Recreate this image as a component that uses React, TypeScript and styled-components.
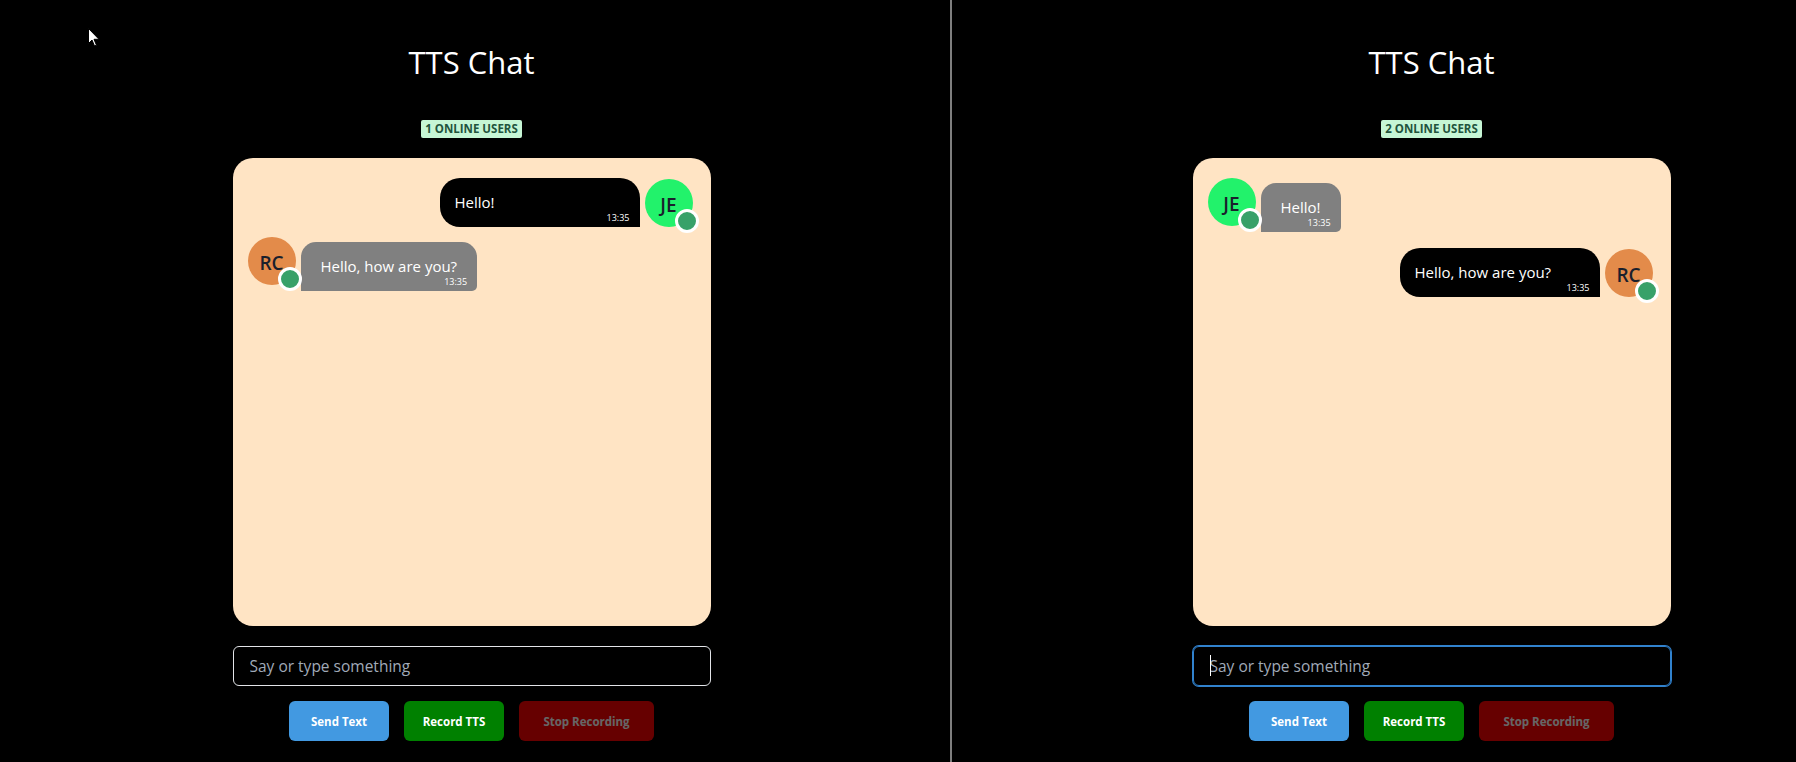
import styled, { createGlobalStyle } from "styled-components"
import React from "react"

const GlobalStyle = createGlobalStyle`
  html, body {
    margin: 0;
    padding: 0;
    background: #000;
  }
  body {
    font-family: "Open Sans", "Noto Sans", sans-serif;
    overflow: hidden;
  }
`

const Screen = styled.div`
  position: relative;
  display: flex;
  width: 1796px;
  height: 762px;
  overflow: hidden;
  background: #000;
`

const Pane = styled.div<{ $width: number; $padRight?: number }>`
  flex: none;
  box-sizing: border-box;
  width: ${(p) => p.$width}px;
  padding-right: ${(p) => p.$padRight || 0}px;
  display: flex;
  flex-direction: column;
  align-items: center;
`

const Divider = styled.div`
  flex: none;
  width: 2px;
  background: #7f7f7f;
`

const Title = styled.h1`
  margin: 43px 0 0;
  font-size: 31px;
  font-weight: 400;
  line-height: 38px;
  color: #fff;
`

const Badge = styled.span`
  margin-top: 39px;
  padding: 0 4px;
  border-radius: 2px;
  background: #c6f6d5;
  color: #22543d;
  font-size: 11.5px;
  font-weight: 700;
  line-height: 18px;
  text-transform: uppercase;
`

const ChatBox = styled.div`
  margin-top: 20px;
  box-sizing: border-box;
  width: 478px;
  height: 468px;
  padding: 20px 18px 0 15px;
  border-radius: 20px;
  background: #ffe4c4;
  display: flex;
  flex-direction: column;
`

const MessageRow = styled.div<{ $own?: boolean }>`
  display: flex;
  justify-content: ${(p) => (p.$own ? "flex-end" : "flex-start")};
  align-items: flex-start;
  gap: 5px;
  margin-bottom: 10px;
`

const Avatar = styled.div<{ $color: string; $own?: boolean }>`
  position: relative;
  flex: none;
  width: 48px;
  height: 48px;
  margin-top: ${(p) => (p.$own ? 1 : 0)}px;
  border-radius: 50%;
  background: ${(p) => p.$color};
  color: #1a202c;
  display: flex;
  align-items: center;
  justify-content: center;
  font-size: 19px;
  font-weight: 600;
  padding-top: 3px;
  box-sizing: border-box;
`

const OnlineDot = styled.span`
  position: absolute;
  right: 0;
  bottom: 0;
  transform: translate(25%, 25%);
  box-sizing: border-box;
  width: 24px;
  height: 24px;
  border: 3.5px solid #fff;
  border-radius: 50%;
  background: #38a169;
`

const Bubble = styled.div<{ $own?: boolean }>`
  box-sizing: border-box;
  width: ${(p) => (p.$own ? "200px" : "auto")};
  height: 49px;
  margin: ${(p) => (p.$own ? "0" : "5px 0 6px")};
  padding: 12px 10px 4px ${(p) => (p.$own ? 15 : 20)}px;
  border-radius: ${(p) => (p.$own ? "20px 20px 0 20px" : "15px 15px 5px 0")};
  background: ${(p) => (p.$own ? "#000" : "#808080")};
  color: #fff;
`

const BubbleText = styled.div`
  padding-right: 10px;
  font-size: 15px;
  line-height: 24px;
  white-space: nowrap;
`

const Time = styled.div`
  margin-top: -2px;
  font-size: 9px;
  line-height: 11px;
  text-align: right;
`

const InputWrap = styled.div`
  position: relative;
  margin-top: 20px;
  width: 478px;
`

const TextInput = styled.input<{ $focused?: boolean }>`
  box-sizing: border-box;
  width: 100%;
  height: 40px;
  padding: 0 16px;
  border: 1px solid ${(p) => (p.$focused ? "#3182ce" : "#e2e4e8")};
  box-shadow: ${(p) => (p.$focused ? "0 0 0 1px #3182ce" : "none")};
  border-radius: 6px;
  background: transparent;
  color: #fff;
  font-family: "Open Sans", "Noto Sans", sans-serif;
  font-size: 15.5px;
  outline: none;

  &::placeholder {
    color: #a0aab8;
  }
`

const Caret = styled.span`
  position: absolute;
  left: 17px;
  top: 9px;
  width: 1px;
  height: 21px;
  background: #fff;
`

const ButtonRow = styled.div`
  margin-top: 15px;
  display: flex;
  gap: 15px;
`

const ActionButton = styled.button<{ $bg: string; $width: number }>`
  width: ${(p) => p.$width}px;
  height: 40px;
  border: none;
  border-radius: 6px;
  background: ${(p) => p.$bg};
  color: #fff;
  font-family: "Open Sans", "Noto Sans", sans-serif;
  font-size: 11.5px;
  font-weight: 700;

  &:disabled {
    opacity: 0.4;
  }
`

const Pointer = styled.svg`
  position: absolute;
  left: 88px;
  top: 28px;
`

type Message = {
  initials: string
  color: string
  text: string
  own: boolean
}

const JE = "#22f26b"
const RC = "#e38b4a"

const ChatMessage = ({ m }: { m: Message }) => {
  const avatar = (
    <Avatar $color={m.color} $own={m.own}>
      {m.initials}
      <OnlineDot />
    </Avatar>
  )
  const bubble = (
    <Bubble $own={m.own}>
      <BubbleText>{m.text}</BubbleText>
      <Time>13:35</Time>
    </Bubble>
  )
  return (
    <MessageRow $own={m.own}>
      {m.own ? bubble : avatar}
      {m.own ? avatar : bubble}
    </MessageRow>
  )
}

const ChatPane = ({
  width,
  padRight,
  online,
  messages,
  focused,
}: {
  width: number
  padRight?: number
  online: number
  messages: Message[]
  focused?: boolean
}) => (
  <Pane $width={width} $padRight={padRight}>
    <Title>TTS Chat</Title>
    <Badge>{online} online users</Badge>
    <ChatBox>
      {messages.map((m, i) => (
        <ChatMessage key={i} m={m} />
      ))}
    </ChatBox>
    <InputWrap>
      <TextInput $focused={focused} placeholder="Say or type something" />
      {focused ? <Caret /> : null}
    </InputWrap>
    <ButtonRow>
      <ActionButton $bg="#4299e1" $width={100}>
        Send Text
      </ActionButton>
      <ActionButton $bg="#008000" $width={100}>
        Record TTS
      </ActionButton>
      <ActionButton $bg="#ff0000" $width={135} disabled>
        Stop Recording
      </ActionButton>
    </ButtonRow>
  </Pane>
)

const App: React.FC = () => {
  const left: Message[] = [
    { initials: "JE", color: JE, text: "Hello!", own: true },
    { initials: "RC", color: RC, text: "Hello, how are you?", own: false },
  ]
  const right: Message[] = [
    { initials: "JE", color: JE, text: "Hello!", own: false },
    { initials: "RC", color: RC, text: "Hello, how are you?", own: true },
  ]

  return (
    <Screen>
      <GlobalStyle />
      <ChatPane width={950} padRight={7} online={1} messages={left} />
      <Divider />
      <ChatPane width={959} online={2} messages={right} focused />
      <Pointer width="12" height="19" viewBox="0 0 12 19">
        <path
          d="M0.5 0.5 L0.5 15.5 L4 12 L6.5 18 L8.5 17.2 L6 11.3 L11 11.3 Z"
          fill="#fff"
          stroke="#000"
          strokeWidth="1"
        />
      </Pointer>
    </Screen>
  )
}

export default App
